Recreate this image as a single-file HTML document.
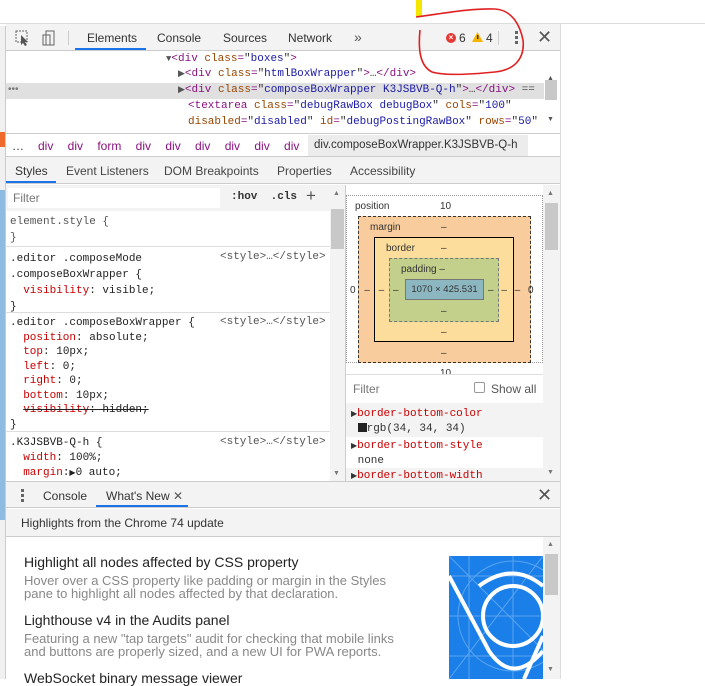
<!DOCTYPE html>
<html><head><meta charset="utf-8"><style>
*{margin:0;padding:0;box-sizing:border-box}
body{width:705px;height:679px;overflow:hidden;background:#fff;position:relative;font-family:"Liberation Sans",sans-serif;font-size:12px;color:#333}
.a{position:absolute}
.m{font-family:"Liberation Mono",monospace;font-size:11px}
.tag{color:#881280}.at{color:#994500}.av{color:#1a1aa6}
.pn{color:#c80000}
.t{white-space:nowrap}
</style></head><body>
<div class="a" style="left:0;top:26px;width:6px;height:653px;background:#f0f0f0"></div>
<div class="a" style="left:0;top:132px;width:5px;height:15px;background:#f06a2c"></div>
<div class="a" style="left:0;top:190px;width:5px;height:330px;background:#8fbbe0"></div>
<div class="a" style="left:5px;top:26px;width:1px;height:653px;background:#ccc"></div>
<div class="a" style="left:0;top:23px;width:705px;height:1px;background:#ddd"></div>
<div class="a" style="left:6px;top:24px;width:554px;height:27px;background:#f3f3f3;border-bottom:1px solid #ccc"></div>
<svg class="a" style="left:14px;top:29px" width="44" height="18"><rect x="2" y="2" width="11" height="11" fill="none" stroke="#666" stroke-dasharray="2 1"/><path d="M7 6 L14 13 L11 13 L13 16 L11 17 L9 14 L7 16Z" fill="#555"/><rect x="29" y="6" width="7" height="10" fill="none" stroke="#666"/><rect x="32" y="2" width="8" height="14" fill="none" stroke="#666"/></svg>
<div class="a" style="left:68px;top:31px;width:1px;height:14px;background:#ccc"></div>
<div class="a t" style="left:87px;top:31px;color:#333">Elements</div>
<div class="a" style="left:75px;top:48px;width:71px;height:2px;background:#1a73e8"></div>
<div class="a t" style="left:157px;top:31px;color:#333">Console</div>
<div class="a t" style="left:223px;top:31px;color:#333">Sources</div>
<div class="a t" style="left:288px;top:31px;color:#333">Network</div>
<div class="a t" style="left:354px;top:29px;font-size:14px;color:#555">»</div>
<div class="a" style="left:446px;top:33px;width:10px;height:10px;border-radius:50%;background:#e53935;color:#fff;font-size:8px;line-height:10px;text-align:center;font-weight:bold">×</div>
<div class="a t" style="left:459px;top:31px">6</div>
<svg class="a" style="left:472px;top:32px" width="11" height="11"><path d="M5.5 0 L11 10 L0 10Z" fill="#f4b400"/><rect x="5" y="3" width="1.4" height="4" fill="#333"/></svg>
<div class="a t" style="left:486px;top:31px">4</div>
<div class="a" style="left:498px;top:31px;width:1px;height:14px;background:#ccc"></div>
<div class="a" style="left:515px;top:31px;width:3px;height:3px;background:#666;box-shadow:0 5px #666,0 10px #666"></div>
<div class="a t" style="left:537px;top:27px;font-size:18px;color:#555">✕</div>
<div class="a" style="left:6px;top:83px;width:538px;height:16px;background:#e0e0e0"></div>
<div class="a t" style="left:8px;top:84px;font-size:10px;color:#777">•••</div>
<div class="a m t" style="left:166px;top:53px"><span style="color:#555;font-size:9px">▼</span><span class="tag">&lt;div</span> <span class="at">class</span><span class="tag">=</span>"<span class="av">boxes</span>"<span class="tag">&gt;</span></div>
<div class="a m t" style="left:178px;top:68px"><span style="color:#555;font-size:9px">▶</span><span class="tag">&lt;div</span> <span class="at">class</span><span class="tag">=</span>"<span class="av">htmlBoxWrapper</span>"<span class="tag">&gt;</span>…<span class="tag">&lt;/div&gt;</span></div>
<div class="a m t" style="left:178px;top:84px"><span style="color:#555;font-size:9px">▶</span><span class="tag">&lt;div</span> <span class="at">class</span><span class="tag">=</span>"<span class="av">composeBoxWrapper K3JSBVB-Q-h</span>"<span class="tag">&gt;</span>…<span class="tag">&lt;/div&gt;</span> <span style="color:#555">==</span></div>
<div class="a m t" style="left:188px;top:100px"><span class="tag">&lt;textarea</span> <span class="at">class</span><span class="tag">=</span>"<span class="av">debugRawBox debugBox</span>" <span class="at">cols</span><span class="tag">=</span>"<span class="av">100</span>"</div>
<div class="a m t" style="left:188px;top:116px"><span class="at">disabled</span><span class="tag">=</span>"<span class="av">disabled</span>" <span class="at">id</span><span class="tag">=</span>"<span class="av">debugPostingRawBox</span>" <span class="at">rows</span><span class="tag">=</span>"<span class="av">50</span>"</div>
<div class="a" style="left:545px;top:80px;width:12px;height:20px;background:#c8c8c8"></div>
<div class="a" style="left:547px;top:75px;font-size:7px;color:#555">▲</div>
<div class="a" style="left:547px;top:116px;font-size:7px;color:#555">▼</div>
<div class="a" style="left:6px;top:133px;width:554px;height:1px;background:#ccc"></div>
<div class="a t" style="left:12px;top:139px;color:#333">…</div>
<div class="a t tag" style="left:38px;top:139px;word-spacing:11px">div div form div div div div div div</div>
<div class="a t" style="left:308px;top:135px;width:220px;height:21px;background:#ececec;padding:4px 6px;font-size:11.5px;overflow:hidden">div.composeBoxWrapper.K3JSBVB-Q-h</div>
<div class="a" style="left:6px;top:156px;width:554px;height:1px;background:#ccc"></div>
<div class="a" style="left:6px;top:157px;width:554px;height:27px;background:#f3f3f3;border-bottom:1px solid #ccc"></div>
<div class="a t" style="left:15px;top:164px">Styles</div>
<div class="a" style="left:6px;top:181px;width:50px;height:2px;background:#1a73e8"></div>
<div class="a t" style="left:66px;top:164px;color:#444">Event Listeners</div>
<div class="a t" style="left:164px;top:164px;color:#444">DOM Breakpoints</div>
<div class="a t" style="left:277px;top:164px;color:#444">Properties</div>
<div class="a t" style="left:350px;top:164px;color:#444">Accessibility</div>
<div class="a" style="left:6px;top:185px;width:324px;height:26px;background:#f3f3f3"></div>
<div class="a" style="left:8px;top:188px;width:212px;height:20px;background:#fff"></div>
<div class="a t" style="left:13px;top:191px;color:#777">Filter</div>
<div class="a m t" style="left:231px;top:191px;font-weight:bold;color:#333">:hov&nbsp; .cls</div>
<div class="a t" style="left:306px;top:186px;font-size:17px;color:#555">+</div>
<div class="a m" style="left:10px;top:214px;color:#555;line-height:16px">element.style {<br>}</div>
<div class="a" style="left:6px;top:246px;width:324px;height:1px;background:#ddd"></div>
<div class="a m t" style="left:10px;top:251px;line-height:16px;color:#222">.editor .composeMode<br>.composeBoxWrapper {<br>&nbsp;&nbsp;<span class="pn">visibility</span>: visible;<br>}</div>
<div class="a m t" style="left:220px;top:251px;color:#555">&lt;style&gt;…&lt;/style&gt;</div>
<div class="a" style="left:6px;top:312px;width:324px;height:1px;background:#ddd"></div>
<div class="a m t" style="left:10px;top:316px;line-height:14.5px;color:#222">.editor .composeBoxWrapper {<br>&nbsp;&nbsp;<span class="pn">position</span>: absolute;<br>&nbsp;&nbsp;<span class="pn">top</span>: 10px;<br>&nbsp;&nbsp;<span class="pn">left</span>: 0;<br>&nbsp;&nbsp;<span class="pn">right</span>: 0;<br>&nbsp;&nbsp;<span class="pn">bottom</span>: 10px;<br>&nbsp;&nbsp;<span style="text-decoration:line-through"><span class="pn">visibility</span>: hidden;</span><br>}</div>
<div class="a m t" style="left:220px;top:316px;color:#555">&lt;style&gt;…&lt;/style&gt;</div>
<div class="a" style="left:6px;top:431px;width:324px;height:1px;background:#ddd"></div>
<div class="a m t" style="left:10px;top:436px;line-height:15px;color:#222">.K3JSBVB-Q-h {<br>&nbsp;&nbsp;<span class="pn">width</span>: 100%;<br>&nbsp;&nbsp;<span class="pn">margin</span>:<span style="font-size:8px">▶</span>0 auto;</div>
<div class="a m t" style="left:220px;top:436px;color:#555">&lt;style&gt;…&lt;/style&gt;</div>
<div class="a" style="left:330px;top:185px;width:15px;height:296px;background:#f3f3f3"></div>
<div class="a" style="left:331px;top:209px;width:13px;height:40px;background:#c8c8c8"></div>
<div class="a" style="left:333px;top:190px;font-size:7px;color:#777">▲</div>
<div class="a" style="left:333px;top:470px;font-size:7px;color:#777">▼</div>
<div class="a" style="left:345px;top:185px;width:1px;height:296px;background:#ccc"></div>
<div class="a" style="left:346px;top:195px;width:197px;height:168px;border:1px dotted #999"></div>
<div class="a t" style="left:355px;top:201px;font-size:10px">position</div>
<div class="a t" style="left:440px;top:201px;font-size:10px">10</div>
<div class="a" style="left:358px;top:216px;width:173px;height:147px;background:#f9cc9d;border:1px dashed #333"></div>
<div class="a t" style="left:370px;top:222px;font-size:10px">margin</div>
<div class="a" style="left:374px;top:237px;width:140px;height:105px;background:#fddd9b;border:1px solid #000"></div>
<div class="a t" style="left:386px;top:243px;font-size:10px">border</div>
<div class="a" style="left:389px;top:258px;width:110px;height:64px;background:#c3d08b;border:1px dashed #777"></div>
<div class="a t" style="left:401px;top:264px;font-size:10px">padding –</div>
<div class="a" style="left:405px;top:279px;width:79px;height:21px;background:#8cb6c0;border:1px solid #777;font-size:9.5px;text-align:center;line-height:19px">1070 × 425.531</div>
<div class="a t" style="left:441px;top:222px;font-size:10px">–</div>
<div class="a t" style="left:441px;top:243px;font-size:10px">–</div>
<div class="a t" style="left:441px;top:306px;font-size:10px">–</div>
<div class="a t" style="left:441px;top:327px;font-size:10px">–</div>
<div class="a t" style="left:441px;top:348px;font-size:10px">–</div>
<div class="a t" style="left:350px;top:285px;font-size:10px;word-spacing:6px">0 – – –</div>
<div class="a t" style="left:488px;top:285px;font-size:10px;word-spacing:5px">– – – 0</div>
<div class="a t" style="left:440px;top:368px;font-size:10px;height:6px;overflow:hidden">10</div>
<div class="a" style="left:346px;top:374px;width:197px;height:1px;background:#ddd"></div>
<div class="a t" style="left:353px;top:382px;color:#777">Filter</div>
<div class="a" style="left:474px;top:382px;width:11px;height:11px;border:1px solid #999;border-radius:2px"></div>
<div class="a t" style="left:491px;top:382px;color:#555">Show all</div>
<div class="a" style="left:346px;top:403px;width:197px;height:34px;background:#f3f3f3"></div>
<div class="a m t" style="left:351px;top:407px;line-height:15px"><span style="font-size:8px">▶</span><span class="pn">border-bottom-color</span><br>&nbsp;<span style="display:inline-block;width:9px;height:9px;background:#222;vertical-align:-1px"></span>rgb(34, 34, 34)</div>
<div class="a m t" style="left:351px;top:439px;line-height:15px"><span style="font-size:8px">▶</span><span class="pn">border-bottom-style</span><br>&nbsp;none</div>
<div class="a" style="left:346px;top:468px;width:197px;height:13px;background:#f3f3f3"></div>
<div class="a m t" style="left:351px;top:470px;height:11px;overflow:hidden"><span style="font-size:8px">▶</span><span class="pn">border-bottom-width</span></div>
<div class="a" style="left:543px;top:185px;width:17px;height:296px;background:#f3f3f3"></div>
<div class="a" style="left:545px;top:203px;width:13px;height:47px;background:#c8c8c8"></div>
<div class="a" style="left:547px;top:190px;font-size:7px;color:#777">▲</div>
<div class="a" style="left:547px;top:469px;font-size:7px;color:#777">▼</div>
<div class="a" style="left:6px;top:481px;width:554px;height:1px;background:#ccc"></div>
<div class="a" style="left:6px;top:482px;width:554px;height:26px;background:#f3f3f3;border-bottom:1px solid #ccc"></div>
<div class="a" style="left:21px;top:489px;width:3px;height:3px;background:#666;box-shadow:0 5px #666,0 10px #666"></div>
<div class="a t" style="left:43px;top:489px">Console</div>
<div class="a t" style="left:106px;top:489px">What's New <span style="color:#555">✕</span></div>
<div class="a" style="left:96px;top:505px;width:92px;height:2px;background:#1a73e8"></div>
<div class="a t" style="left:537px;top:485px;font-size:18px;color:#555">✕</div>
<div class="a" style="left:6px;top:509px;width:554px;height:28px;background:#f3f3f3;border-bottom:1px solid #ccc"></div>
<div class="a t" style="left:21px;top:516px">Highlights from the Chrome 74 update</div>
<div class="a t" style="left:24px;top:554px;font-size:14px;color:#222">Highlight all nodes affected by CSS property</div>
<div class="a t" style="left:24px;top:574px;font-size:13px;color:#888;line-height:13px">Hover over a CSS property like padding or margin in the Styles<br>pane to highlight all nodes affected by that declaration.</div>
<div class="a t" style="left:24px;top:612px;font-size:14px;color:#222">Lighthouse v4 in the Audits panel</div>
<div class="a t" style="left:24px;top:632px;font-size:13px;color:#888;line-height:13px">Featuring a new "tap targets" audit for checking that mobile links<br>and buttons are properly sized, and a new UI for PWA reports.</div>
<div class="a t" style="left:24px;top:670px;font-size:14px;color:#222">WebSocket binary message viewer</div>
<svg class="a" style="left:449px;top:556px" width="94" height="123"><rect width="94" height="123" fill="#1a7fe8"/><g stroke="#5aa4f0" stroke-width="1" fill="none"><path d="M0 20H94M0 60H94M0 100H94M20 0V123M64 0V123M0 0L94 94M94 0L0 123"/><circle cx="64" cy="60" r="55"/></g><g stroke="#fff" stroke-width="4" fill="none"><circle cx="64" cy="60" r="30"/><path d="M0 20 L40 95 Q64 130 94 95"/><path d="M30 30 Q64 5 94 30"/><path d="M94 80 L75 123"/></g></svg>
<div class="a" style="left:543px;top:537px;width:17px;height:142px;background:#f3f3f3"></div>
<div class="a" style="left:545px;top:554px;width:13px;height:41px;background:#c8c8c8"></div>
<div class="a" style="left:547px;top:541px;font-size:7px;color:#777">▲</div>
<div class="a" style="left:547px;top:666px;font-size:7px;color:#777">▼</div>
<div class="a" style="left:560px;top:24px;width:1px;height:655px;background:#ddd"></div>
<div class="a" style="left:416px;top:0;width:6px;height:16px;background:#f5e600"></div>
<svg class="a" style="left:0;top:0" width="705" height="100"><path d="M416 17 C440 14 470 8 495 9 C512 10 520 25 523 40 C525 58 515 70 495 72 C475 74 445 76 432 72 C420 66 418 50 420 30" fill="none" stroke="#e02020" stroke-width="1.6"/></svg>
</body></html>
